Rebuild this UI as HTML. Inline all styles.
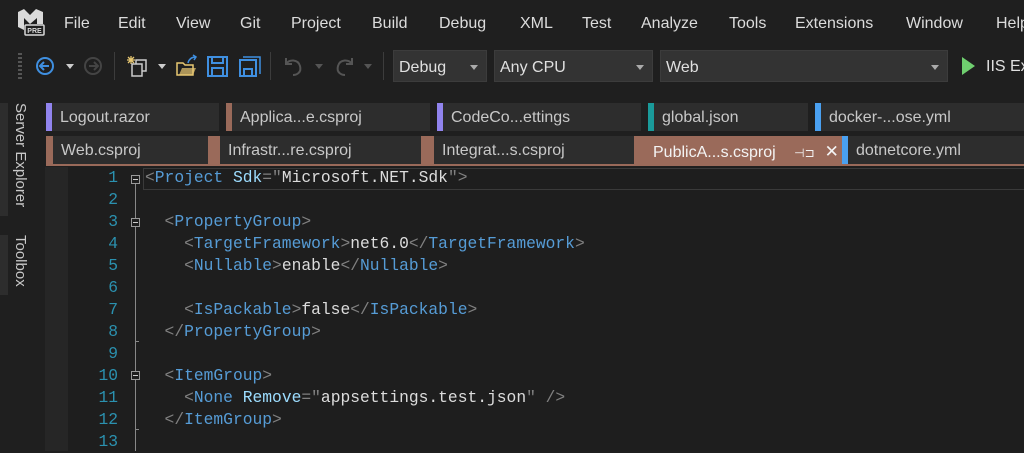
<!DOCTYPE html>
<html><head><meta charset="utf-8"><style>
*{margin:0;padding:0;box-sizing:border-box}
body{width:1024px;height:451px;background:#1f1f1f;overflow:hidden;position:relative;font-family:"Liberation Sans",sans-serif;color:#d6d6d6}
.a{position:absolute}
.menu span{position:absolute;top:15px;font-size:16px;color:#dcdcdc}
.dd{position:absolute;top:50px;height:32px;background:#333;border:1px solid #3c3c3c;font-size:16px;color:#e0e0e0;padding:8px 0 0 5px}
.dd i{position:absolute;right:8px;top:14px;border:4px solid transparent;border-top:5px solid #aaa}
.tab{position:absolute;height:28px;background:#2d2d2d;font-size:16px;color:#c8c8c8;padding:6px 0 0 8px;border-left:6px solid;white-space:nowrap}
.code{position:absolute;left:0;font-family:"Liberation Mono",monospace;font-size:16.3px;white-space:pre;line-height:22px}
.ln{color:#2b91af;text-align:right;width:118px}
.t{color:#569cd6}.p{color:#808080}.v{color:#dcdcdc}.at{color:#9cdcfe}
.fb{position:absolute;left:131px;width:9px;height:9px;border:1px solid #999;background:#1e1e1e}
.fb:after{content:"";position:absolute;left:1px;top:3px;width:5px;height:1px;background:#ccc}
</style></head><body>
<svg class="a" style="left:16px;top:8px" width="30" height="28" viewBox="0 0 30 28"><path d="M2 4 L8 1 L14 7 L20 1 L27 4 L27 16 L21 16 L21 10 L14 16 L8 10 L8 22 L2 19 Z" fill="#d9d9d9"/><rect x="9" y="17" width="19" height="10" rx="1" fill="#1f1f1f" stroke="#d9d9d9" stroke-width="1.5"/><text x="18.5" y="25" font-size="7" font-weight="bold" fill="#d9d9d9" text-anchor="middle" font-family="Liberation Sans">PRE</text></svg>
<div class="menu"><span style="left:64px">File</span><span style="left:118px">Edit</span><span style="left:176px">View</span><span style="left:240px">Git</span><span style="left:291px">Project</span><span style="left:372px">Build</span><span style="left:439px">Debug</span><span style="left:520px">XML</span><span style="left:582px">Test</span><span style="left:641px">Analyze</span><span style="left:729px">Tools</span><span style="left:795px">Extensions</span><span style="left:906px">Window</span><span style="left:996px">Help</span></div>
<div class="a" style="left:18px;top:53px;width:4px;height:26px;background:repeating-linear-gradient(#555 0 2px,transparent 2px 4px)"></div>
<svg class="a" style="left:35px;top:55px" width="24" height="22"><circle cx="10" cy="11" r="8" fill="none" stroke="#3f8fe0" stroke-width="2"/><path d="M14 11H6M9 7L5 11L9 15" fill="none" stroke="#3f8fe0" stroke-width="2"/></svg>
<div class="a" style="left:66px;top:64px;border:4px solid transparent;border-top:5px solid #ccc"></div>
<svg class="a" style="left:83px;top:55px" width="22" height="22"><circle cx="10" cy="11" r="8" fill="none" stroke="#444" stroke-width="2"/><path d="M6 11H14M11 7L15 11L11 15" fill="none" stroke="#444" stroke-width="2"/></svg>
<div class="a" style="left:114px;top:52px;width:1px;height:28px;background:#3c3c3c"></div>
<svg class="a" style="left:126px;top:54px" width="30" height="26"><path d="M5 2v8M1 6h8M2 3l6 6M8 3l-6 6" stroke="#e8c872" stroke-width="1.3"/><rect x="10" y="6" width="10" height="11" fill="none" stroke="#ccc" stroke-width="1.5"/><rect x="6" y="10" width="10" height="12" fill="#1f1f1f" stroke="#ccc" stroke-width="1.5"/></svg>
<div class="a" style="left:158px;top:64px;border:4px solid transparent;border-top:5px solid #ccc"></div>
<svg class="a" style="left:175px;top:54px" width="24" height="24"><path d="M2 9h6l2 2h8v10H2z" fill="none" stroke="#e8c872" stroke-width="1.5"/><path d="M4 21l3-7h14l-3 7z" fill="#e8c872" opacity=".7"/><path d="M13 9c1-4 4-6 8-6M18 1l3 2-2 3" fill="none" stroke="#3f8fe0" stroke-width="1.5"/></svg>
<svg class="a" style="left:207px;top:56px" width="22" height="22"><rect x="1" y="1" width="19" height="19" fill="none" stroke="#3f8fe0" stroke-width="2"/><rect x="5" y="1" width="11" height="6" fill="none" stroke="#3f8fe0" stroke-width="2"/><rect x="5" y="12" width="11" height="8" fill="none" stroke="#3f8fe0" stroke-width="2"/></svg>
<svg class="a" style="left:238px;top:54px" width="24" height="24"><path d="M5 3h17v17" fill="none" stroke="#3f8fe0" stroke-width="1.5"/><rect x="2" y="6" width="16" height="16" fill="none" stroke="#3f8fe0" stroke-width="2"/><rect x="6" y="15" width="8" height="7" fill="none" stroke="#3f8fe0" stroke-width="2"/></svg>
<div class="a" style="left:270px;top:52px;width:1px;height:28px;background:#3c3c3c"></div>
<svg class="a" style="left:283px;top:55px" width="22" height="22"><path d="M3 3v6h6M3 9c3-5 12-5 14 2s-4 9-7 9" fill="none" stroke="#555" stroke-width="2"/></svg>
<div class="a" style="left:315px;top:64px;border:4px solid transparent;border-top:5px solid #555"></div>
<svg class="a" style="left:333px;top:55px" width="22" height="22"><path d="M19 3v6h-6M19 9c-3-5-12-5-14 2s4 9 7 9" fill="none" stroke="#555" stroke-width="2"/></svg>
<div class="a" style="left:364px;top:64px;border:4px solid transparent;border-top:5px solid #555"></div>
<div class="a" style="left:383px;top:52px;width:1px;height:28px;background:#3c3c3c"></div>
<div class="dd" style="left:393px;width:94px">Debug<i></i></div>
<div class="dd" style="left:494px;width:159px">Any CPU<i></i></div>
<div class="dd" style="left:660px;width:288px">Web<i></i></div>
<svg class="a" style="left:960px;top:56px" width="16" height="20"><path d="M2 1L15 10L2 19Z" fill="#6fcf6f"/></svg>
<div class="a" style="left:986px;top:58px;font-size:16px;color:#e0e0e0;white-space:nowrap">IIS Express</div>
<div class="a" style="left:45px;top:167px;width:979px;height:284px;background:#1e1e1e"></div>
<div class="a" style="left:45px;top:167px;width:23px;height:284px;background:#262626"></div>
<div class="a" style="left:0;top:103px;width:8px;height:113px;background:#2d2d2d"></div>
<div class="a" style="left:0;top:235px;width:8px;height:60px;background:#2d2d2d"></div>
<div class="a" style="left:12px;top:103px;writing-mode:vertical-rl;font-size:15px;color:#c8c8c8;white-space:nowrap">Server Explorer</div>
<div class="a" style="left:12px;top:235px;writing-mode:vertical-rl;font-size:15px;color:#c8c8c8;white-space:nowrap">Toolbox</div>
<div class="tab" style="left:46px;top:103px;width:173px;border-color:#9184ee">Logout.razor</div>
<div class="tab" style="left:226px;top:103px;width:204px;border-color:#9a6a5a">Applica...e.csproj</div>
<div class="tab" style="left:437px;top:103px;width:204px;border-color:#9184ee">CodeCo...ettings</div>
<div class="tab" style="left:648px;top:103px;width:160px;border-color:#1a9a9a">global.json</div>
<div class="tab" style="left:815px;top:103px;width:209px;border-color:#4aa0f0">docker-...ose.yml</div>
<div class="a" style="left:46px;top:136px;width:978px;height:30px;background:#9a6a5a"></div>
<div class="tab" style="left:46px;top:136px;width:162px;border-color:#9a6a5a;border-left-width:7px">Web.csproj</div>
<div class="tab" style="left:214px;top:136px;width:207px;border-color:#9a6a5a">Infrastr...re.csproj</div>
<div class="tab" style="left:428px;top:136px;width:206px;border-color:#9a6a5a">Integrat...s.csproj</div>
<div class="tab" style="left:641px;top:136px;width:200px;background:#9a6a5a;border:none;color:#f4f4f4;padding-left:12px">PublicA...s.csproj <span style="margin-left:14px;font-size:12px">⊣⊐</span><span style="margin-left:10px;font-size:17px">✕</span></div>
<div class="tab" style="left:842px;top:136px;width:182px;border-color:#4aa0f0">dotnetcore.yml</div>
<div class="a" style="left:143px;top:168px;width:881px;height:22px;border:1px solid #3a3a3a;border-right:none"></div>
<div class="a" style="left:135px;top:178px;width:1px;height:273px;background:#888"></div>
<div class="a" style="left:135px;top:341px;width:4px;height:1px;background:#888"></div>
<div class="a" style="left:135px;top:429px;width:4px;height:1px;background:#888"></div>
<div class="fb" style="top:175px"></div><div class="fb" style="top:218px"></div><div class="fb" style="top:371px"></div>
<div class="code ln" style="top:167px">1
2
3
4
5
6
7
8
9
10
11
12
13</div>
<div class="code" style="left:145px;top:167px"><span class="p">&lt;</span><span class="t">Project</span> <span class="at">Sdk</span><span class="p">="</span><span class="v">Microsoft.NET.Sdk</span><span class="p">"&gt;</span>

  <span class="p">&lt;</span><span class="t">PropertyGroup</span><span class="p">&gt;</span>
    <span class="p">&lt;</span><span class="t">TargetFramework</span><span class="p">&gt;</span><span class="v">net6.0</span><span class="p">&lt;/</span><span class="t">TargetFramework</span><span class="p">&gt;</span>
    <span class="p">&lt;</span><span class="t">Nullable</span><span class="p">&gt;</span><span class="v">enable</span><span class="p">&lt;/</span><span class="t">Nullable</span><span class="p">&gt;</span>

    <span class="p">&lt;</span><span class="t">IsPackable</span><span class="p">&gt;</span><span class="v">false</span><span class="p">&lt;/</span><span class="t">IsPackable</span><span class="p">&gt;</span>
  <span class="p">&lt;/</span><span class="t">PropertyGroup</span><span class="p">&gt;</span>

  <span class="p">&lt;</span><span class="t">ItemGroup</span><span class="p">&gt;</span>
    <span class="p">&lt;</span><span class="t">None</span> <span class="at">Remove</span><span class="p">="</span><span class="v">appsettings.test.json</span><span class="p">" /&gt;</span>
  <span class="p">&lt;/</span><span class="t">ItemGroup</span><span class="p">&gt;</span>
</div>
</body></html>
